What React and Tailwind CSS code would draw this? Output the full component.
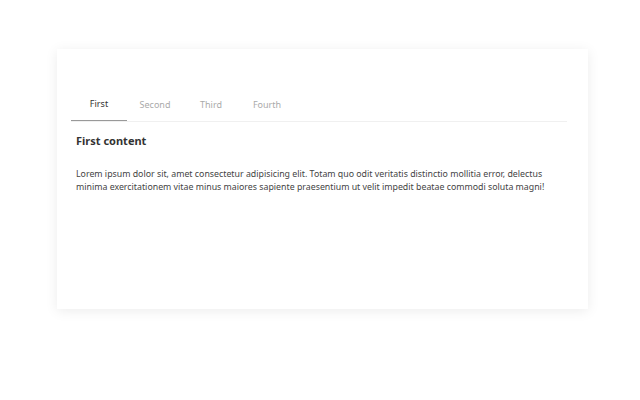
export default function App() {
  const tabs = ["First", "Second", "Third", "Fourth"];
  return (
    <div className="w-[640px] h-[400px] bg-white pt-[49px] pl-[57px]" style={{ fontFamily: '"Noto Sans", "Open Sans", sans-serif' }}>
      <div className="w-[531px] h-[260px] bg-white shadow-[0_2px_12px_rgba(0,0,0,0.08)] pt-[46px] px-[14px]">
        <div className="flex border-b border-[#f0f0f0] w-[496px]">
          {tabs.map((t, i) => (
            <div
              key={t}
              className={`w-[56px] h-[26px] pb-[7px] flex items-center justify-center text-[9px] ${i === 0 ? "text-[#333] border-b-[1.5px] border-[#999] -mb-px" : "text-[#aaa]"}`}
            >
              {t}
            </div>
          ))}
        </div>
        <div className="px-[5px]">
          <h2 className="text-[11px] font-bold text-[#333] mt-[11px] leading-[16px]">First content</h2>
          <p className="w-[478px] text-[8.8px] text-[#444] mt-[19px] leading-[13px]">
            Lorem ipsum dolor sit, amet consectetur adipisicing elit. Totam quo odit veritatis distinctio mollitia error, delectus minima exercitationem vitae minus maiores sapiente praesentium ut velit impedit beatae commodi soluta magni!
          </p>
        </div>
      </div>
    </div>
  );
}
